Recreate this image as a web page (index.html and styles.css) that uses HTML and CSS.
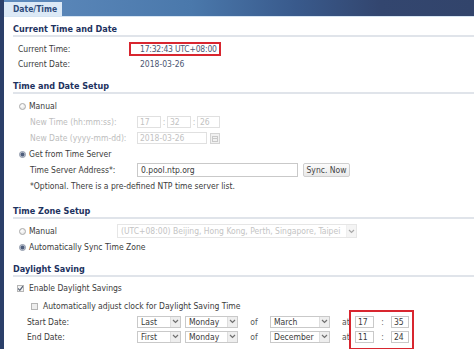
FILE: index.html
```html
<!DOCTYPE html>
<html>
<head>
    <link rel="stylesheet" href="styles.css">
</head>
<body>
    <div class="page">
        <div class="topbar">
            <div class="tab">Date/Time</div>
        </div>
        <div class="content">

            <div class="sec-head">Current Time and Date</div>
            <div class="row r15 ind-a first-row">
                <span class="lbl" style="width:111px">Current Time:</span>
                <span class="val mark">17:32:43 UTC+08:00</span>
            </div>
            <div class="row r15 ind-a">
                <span class="lbl" style="width:122px">Current Date:</span>
                <span class="val">2018-03-26</span>
            </div>

            <div class="sec-head gap-b">Time and Date Setup</div>
            <div class="row r16 ind-r first-row">
                <span class="radio"></span>
                <span class="lbl">Manual</span>
            </div>
            <div class="row r16 ind-s">
                <span class="lbl off w107">New Time (hh:mm:ss):</span>
                <span class="box off w24">17</span>
                <span class="colon off">:</span>
                <span class="box off w24">32</span>
                <span class="colon off">:</span>
                <span class="box off w23">26</span>
            </div>
            <div class="row r16 ind-s">
                <span class="lbl off w107">New Date (yyyy-mm-dd):</span>
                <span class="box off w70">2018-03-26</span>
                <span class="cal">
                    <svg width="10" height="11" viewBox="0 0 10 11">
                        <rect x="0.5" y="0.5" width="9" height="10" fill="#f1f1f1" stroke="#d4d4d4"/>
                        <rect x="2.5" y="3.5" width="5" height="5" fill="none" stroke="#c9c9c9"/>
                        <line x1="2.5" y1="5.5" x2="7.5" y2="5.5" stroke="#c9c9c9"/>
                    </svg>
                </span>
            </div>
            <div class="row r16 ind-r">
                <span class="radio on"></span>
                <span class="lbl">Get from Time Server</span>
            </div>
            <div class="row r16 ind-s">
                <span class="lbl w107">Time Server Address*:</span>
                <span class="box tall w161">0.pool.ntp.org</span>
                <span class="btn">Sync. Now</span>
            </div>
            <div class="row r16 ind-s">
                <span class="lbl">*Optional. There is a pre-defined NTP time server list.</span>
            </div>

            <div class="sec-head gap-c">Time Zone Setup</div>
            <div class="row r16 ind-r first-row">
                <span class="radio"></span>
                <span class="lbl w88">Manual</span>
                <span class="select off w240">
                    <span class="sel-text">(UTC+08:00) Beijing, Hong Kong, Perth, Singapore, Taipei</span>
                    <span class="arrow"></span>
                </span>
            </div>
            <div class="row r16 ind-r">
                <span class="radio on"></span>
                <span class="lbl">Automatically Sync Time Zone</span>
            </div>

            <div class="sec-head gap-d">Daylight Saving</div>
            <div class="dst">
                <div class="row r16 ind-c dst-first">
                    <span class="check on"></span>
                    <span class="lbl">Enable Daylight Savings</span>
                </div>
                <div class="row r16 ind-c2 mt2">
                    <span class="check"></span>
                    <span class="lbl">Automatically adjust clock for Daylight Saving Time</span>
                </div>
                <div class="row r15 ind-d">
                    <span class="lbl w110">Start Date:</span>
                    <span class="select w44"><span class="sel-text">Last</span><span class="arrow"></span></span>
                    <span class="select w53 ml4"><span class="sel-text">Monday</span><span class="arrow"></span></span>
                    <span class="word w32">of</span>
                    <span class="select w60"><span class="sel-text">March</span><span class="arrow"></span></span>
                    <span class="word at">at</span>
                    <span class="box w19 ml4">17</span>
                    <span class="colon wide">:</span>
                    <span class="box w18">35</span>
                </div>
                <div class="row r15 ind-d">
                    <span class="lbl w110">End Date:</span>
                    <span class="select w44"><span class="sel-text">First</span><span class="arrow"></span></span>
                    <span class="select w53 ml4"><span class="sel-text">Monday</span><span class="arrow"></span></span>
                    <span class="word w32">of</span>
                    <span class="select w60"><span class="sel-text">December</span><span class="arrow"></span></span>
                    <span class="word at">at</span>
                    <span class="box w19 ml4">11</span>
                    <span class="colon wide">:</span>
                    <span class="box w18">24</span>
                </div>
                <div class="row r15 ind-d">
                    <span class="lbl w110"></span>
                    <span class="box w16 stub"></span>
                </div>
                <div class="red-box"></div>
            </div>

        </div>
    </div>
</body>
</html>
```

FILE: styles.css
```css
body {
    margin: 0;
    background: #fff;
    font-family: "DejaVu Sans", "Liberation Sans", sans-serif;
    font-stretch: condensed;
    font-size: 8.5px;
    color: #3b3b3b;
}
.page {
    width: 474px;
    height: 349px;
    overflow: hidden;
    border-left: 4px solid #2b3f69;
    box-sizing: border-box;
}
.topbar {
    height: 16px;
    background: linear-gradient(to right, #5f8bbd 0%, #4a78ab 40%, #395a8c 62%, #33466f 80%, #32446b 100%);
    border-bottom: 1px solid #d6e5f3;
    display: flex;
    align-items: flex-end;
}
.tab {
    height: 14px;
    width: 58px;
    background: #dce9f6;
    color: #2c4b7b;
    font-weight: bold;
    font-size: 8.5px;
    line-height: 14px;
    padding-left: 9px;
    box-sizing: border-box;
}
.content {
    padding: 7px 0 0 9px;
}
.sec-head {
    height: 11px;
    line-height: 11px;
    font-weight: bold;
    font-size: 9px;
    color: #1d3260;
    border-bottom: 2px solid #e0e4ea;
}
.gap-b { margin-top: 10px; }
.gap-c { margin-top: 12px; }
.gap-d { margin-top: 9px; }

.row {
    display: flex;
    align-items: center;
    white-space: nowrap;
}
.r15 { height: 15px; }
.r16 { height: 16px; }
.first-row { margin-top: 4px; }
.dst-first { margin-top: 3px; }
.mt2 { margin-top: 2px; }
.ind-a { padding-left: 5px; }
.ind-r { padding-left: 6px; }
.ind-s { padding-left: 17px; }
.ind-c { padding-left: 4px; }
.ind-c2 { padding-left: 18px; }
.ind-d { padding-left: 14px; }

.lbl { display: inline-block; }
.off { color: #bdbdbd; }
.w107 { width: 107px; }
.w110 { width: 110px; }
.w88 { width: 88px; }

.val { color: #4b5672; }
.mark {
    box-sizing: border-box;
    width: 92px;
    height: 14px;
    line-height: 10px;
    padding-left: 9px;
    letter-spacing: -0.2px;
    border: 2px solid #d8262f;
}

.radio {
    width: 7px;
    height: 7px;
    border-radius: 50%;
    border: 1px solid #a9a9a9;
    background: radial-gradient(circle at 40% 35%, #ffffff, #dedede);
    box-sizing: border-box;
    margin-right: 3px;
}
.radio.on {
    border-color: #8a94a6;
    background: radial-gradient(circle, #4f5e7c 0, #4f5e7c 1.6px, #c5cbd6 2.3px, #eef0f4 100%);
}
.check {
    width: 7px;
    height: 7px;
    border: 1px solid #b5b5b5;
    background: #eeeeee;
    box-sizing: border-box;
    margin-right: 5px;
}
.check.on {
    background: #f4f4f4 url("data:image/svg+xml;utf8,<svg xmlns='http://www.w3.org/2000/svg' width='7' height='7'><path d='M1 3.5 L2.8 5.4 L6.2 0.8' fill='none' stroke='%23586378' stroke-width='1.2'/></svg>") no-repeat center;
}

.box {
    box-sizing: border-box;
    height: 12px;
    line-height: 10px;
    border: 1px solid #c9c9c9;
    padding-left: 2px;
    color: #3b3b3b;
    background: #fff;
}
.box.off {
    border-color: #e0e0e0;
    color: #c2c2c2;
}
.box.tall { height: 14px; line-height: 12px; padding-left: 3px; }
.box.stub { height: 6px; background: #e6e6e6; border-color: #dadada; align-self: flex-end; }
.w16 { width: 16px; }
.w18 { width: 18px; }
.w19 { width: 19px; }
.w23 { width: 23px; }
.w24 { width: 24px; }
.w70 { width: 70px; }
.w161 { width: 161px; }
.ml4 { margin-left: 4px; }

.colon {
    width: 6px;
    text-align: center;
}
.colon.wide { width: 17px; color: #666; }
.cal {
    margin-left: 3px;
    display: flex;
}
.btn {
    box-sizing: border-box;
    margin-left: 5px;
    width: 47px;
    height: 14px;
    line-height: 12px;
    border: 1px solid #cfcfcf;
    border-radius: 2px;
    background: linear-gradient(#fbfbfb, #e9e9e9);
    text-align: center;
    color: #444;
}

.select {
    box-sizing: border-box;
    display: flex;
    height: 12px;
    border: 1px solid #c9c9c9;
    background: #fff;
}
.select .sel-text {
    flex: 1;
    line-height: 10px;
    padding-left: 3px;
    overflow: hidden;
}
.select .arrow {
    width: 9px;
    background: #eeeeee url("data:image/svg+xml;utf8,<svg xmlns='http://www.w3.org/2000/svg' width='7' height='5'><path d='M1 1 L3.5 3.5 L6 1' fill='none' stroke='%23707070' stroke-width='1.2'/></svg>") no-repeat center;
    border-left: 1px solid #dedede;
}
.select.off {
    height: 14px;
    border-color: #e6e6e6;
    color: #c4c4c4;
}
.select.off .sel-text { line-height: 12px; }
.select.off .arrow {
    margin-left: 3px;
    border-left: 1px solid #e6e6e6;
    opacity: 0.6;
}
.w44 { width: 44px; }
.w53 { width: 53px; }
.w60 { width: 60px; }
.w240 { width: 240px; }

.word {
    text-align: center;
    color: #555;
}
.w32 { width: 32px; }
.word.at { margin-left: 12px; width: 9px; text-align: left; }

.dst { position: relative; }
.red-box {
    position: absolute;
    left: 336px;
    top: 30px;
    width: 65px;
    height: 40px;
    border: 2px solid #d8262f;
    box-sizing: border-box;
}
```
